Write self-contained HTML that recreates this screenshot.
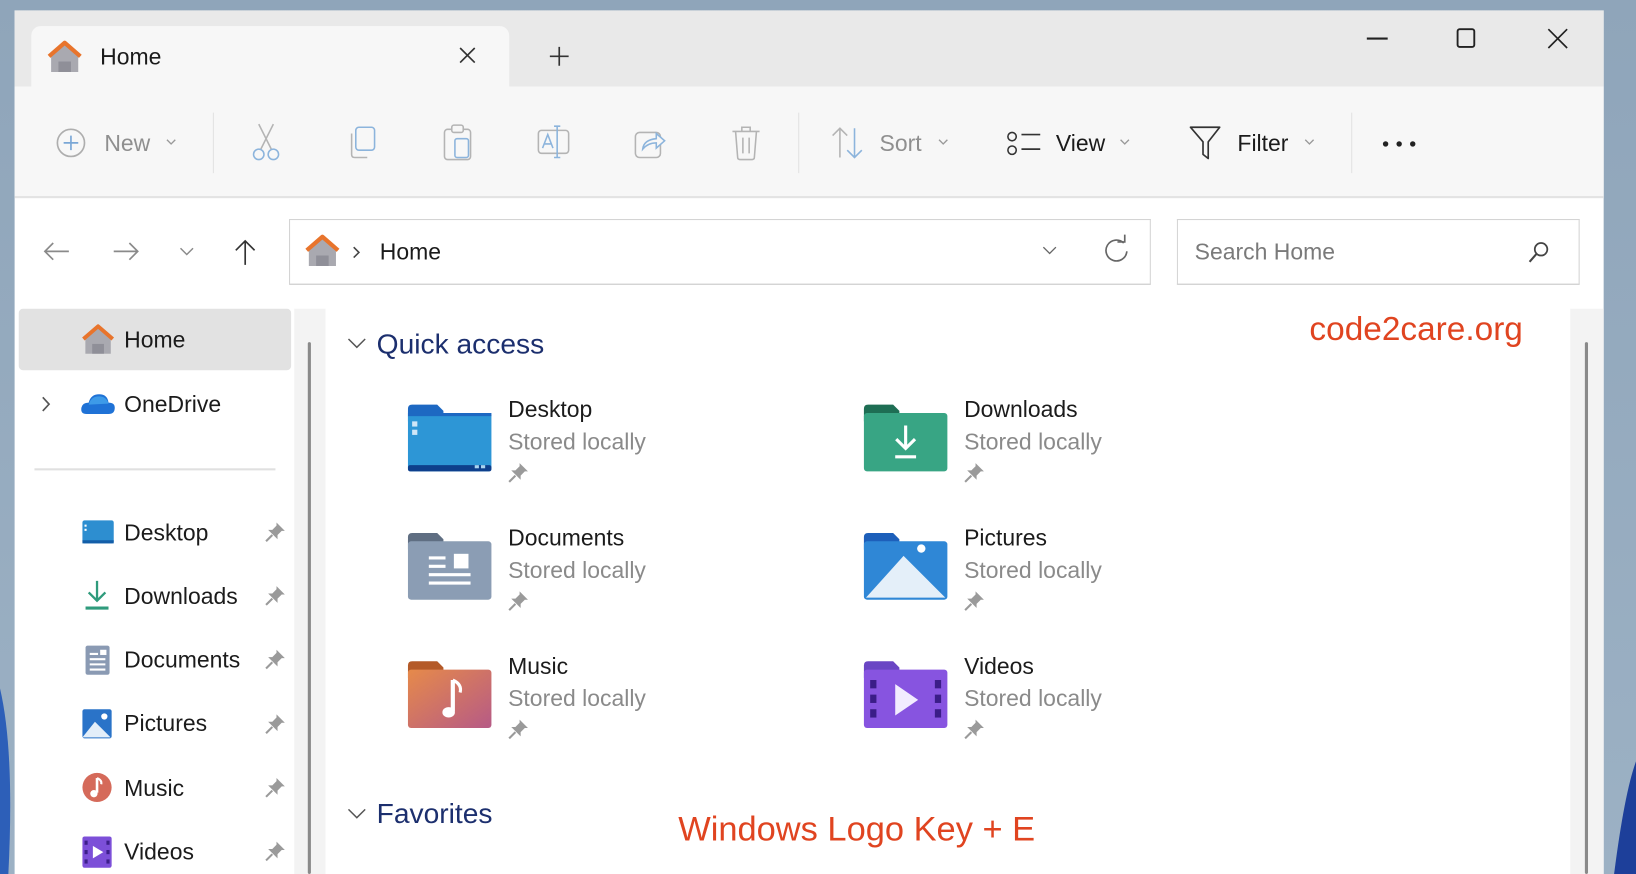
<!DOCTYPE html>
<html><head><meta charset="utf-8"><style>
html,body{margin:0;padding:0;width:1636px;height:874px;overflow:hidden;background:#8fa6bb;}
#w{position:absolute;left:0;top:0;width:1568px;height:838px;transform:scale(1.04337,1.04296);transform-origin:0 0;font-family:"Segoe UI","Liberation Sans",sans-serif;color:#1b1b1b;}
.a{position:absolute;}
.t{position:absolute;white-space:nowrap;line-height:1;font-size:22px!important;}
.big{font-size:27px!important}
svg{position:absolute;overflow:visible;}
</style></head><body><div id="w">
<div class="a" style="left:0;top:0;width:1568px;height:838px;background:linear-gradient(180deg,#8fa5ba,#9cb1c4)"></div>
<svg style="left:0;top:600px" width="16" height="238"><path d="M0 60 Q14 120 8 238 L0 238Z" fill="#2d5fb8"/></svg>
<svg style="left:1537px;top:700px" width="31" height="138"><path d="M10 138 Q20 60 31 30 L31 138Z" fill="#1d3f9a"/></svg>
<div class="a" style="left:14px;top:10px;width:1523px;height:828px;background:#fff"></div>
<div class="a" style="left:14px;top:10px;width:1523px;height:73px;background:#e9e9e9"></div>
<div class="a" style="left:30px;top:25px;width:458px;height:60px;background:#f7f7f7;border-radius:9px 9px 0 0"></div>
<div class="a" style="left:14px;top:83px;width:1523px;height:105px;background:#f7f7f7;border-bottom:2px solid #e3e3e3"></div>
<svg style="left:45px;top:39px" width="34" height="32" viewBox="0 0 34 32"><path d="M4 14 L17 2 L30 14 V30 H4Z" fill="#a9a9b0"/><path d="M11 30V20h12v10" fill="#8f8f98"/><path d="M2 15 L17 2 L32 15" stroke="#e8742c" stroke-width="4" fill="none" stroke-linejoin="round"/></svg>
<div class="t" style="left:96px;top:44px">Home</div>
<svg style="left:440px;top:45px" width="16" height="16"><path d="M1 1L15 15M15 1L1 15" stroke="#333" stroke-width="1.6"/></svg>
<svg style="left:527px;top:45px" width="18" height="18"><path d="M9 0V18M0 9H18" stroke="#333" stroke-width="1.6"/></svg>
<svg style="left:1310px;top:36px" width="20" height="2"><path d="M0 1H20" stroke="#222" stroke-width="2"/></svg>
<svg style="left:1396px;top:27px" width="18" height="20"><rect x="1" y="1" width="16" height="17" rx="2" stroke="#222" stroke-width="1.8" fill="none"/></svg>
<svg style="left:1483px;top:27px" width="20" height="20"><path d="M1 1L19 19M19 1L1 19" stroke="#222" stroke-width="1.6"/></svg>
<svg style="left:53px;top:122px" width="30" height="30"><circle cx="15" cy="15" r="13" stroke="#aeaeae" stroke-width="1.6" fill="none"/><path d="M15 8V22M8 15H22" stroke="#7aa7d6" stroke-width="1.6"/></svg>
<div class="t" style="left:100px;top:127px;color:#8f8f8f">New</div>
<svg style="left:159px;top:133px" width="10" height="6"><path d="M1 1L5 5L9 1" stroke="#999" stroke-width="1.3" fill="none"/></svg>
<div class="a" style="left:204px;top:108px;width:1px;height:58px;background:#e2e2e2"></div>
<svg style="left:240px;top:119px" width="30" height="36" viewBox="0 0 30 36"><path d="M8 0L20 24M22 0L10 24" stroke="#b4b4b4" stroke-width="1.5"/><circle cx="8" cy="29" r="5" stroke="#8cb4dc" stroke-width="1.5" fill="none"/><circle cx="22" cy="29" r="5" stroke="#8cb4dc" stroke-width="1.5" fill="none"/></svg>
<svg style="left:332px;top:121px" width="30" height="32"><rect x="9" y="1" width="18" height="22" rx="3" stroke="#8cb4dc" stroke-width="1.5" fill="none"/><path d="M5 7V27Q5 30 8 30H20" stroke="#b4b4b4" stroke-width="1.5" fill="none"/></svg>
<svg style="left:424px;top:119px" width="30" height="36"><rect x="2" y="5" width="25" height="29" rx="3" stroke="#b4b4b4" stroke-width="1.5" fill="none"/><rect x="9" y="1" width="11" height="7" rx="2" stroke="#b4b4b4" stroke-width="1.5" fill="#f7f7f7"/><rect x="12" y="14" width="13" height="18" rx="2" stroke="#8cb4dc" stroke-width="1.5" fill="none"/></svg>
<svg style="left:514px;top:120px" width="34" height="34"><rect x="2" y="5" width="29" height="22" rx="3" stroke="#b4b4b4" stroke-width="1.5" fill="none"/><path d="M6 22L11 9L16 22M8 18H14" stroke="#8cb4dc" stroke-width="1.5" fill="none"/><path d="M20 1V31M17 1H23M17 31H23" stroke="#8cb4dc" stroke-width="1.5" fill="#f7f7f7"/></svg>
<svg style="left:607px;top:121px" width="32" height="32"><rect x="2" y="6" width="24" height="24" rx="4" stroke="#b4b4b4" stroke-width="1.5" fill="none"/><path d="M9 22Q10 13 22 12V7L30 14L22 21V16Q14 16 9 22Z" stroke="#8cb4dc" stroke-width="1.5" fill="#f7f7f7"/></svg>
<svg style="left:701px;top:119px" width="28" height="36"><path d="M1 7H27M10 7V3H18V7" stroke="#b4b4b4" stroke-width="1.5" fill="none"/><path d="M4 7L6 32Q6 34 9 34H19Q22 34 22 32L24 7" stroke="#b4b4b4" stroke-width="1.5" fill="none"/><path d="M11 13V28M17 13V28" stroke="#b4b4b4" stroke-width="1.5"/></svg>
<div class="a" style="left:765px;top:108px;width:1px;height:58px;background:#e2e2e2"></div>
<svg style="left:797px;top:121px" width="32" height="32"><path d="M8 30V2M1 9L8 2L15 9" stroke="#b4b4b4" stroke-width="1.5" fill="none"/><path d="M22 2V30M15 23L22 30L29 23" stroke="#8cb4dc" stroke-width="1.5" fill="none"/></svg>
<div class="t" style="left:843px;top:127px;color:#8f8f8f">Sort</div>
<svg style="left:899px;top:133px" width="10" height="6"><path d="M1 1L5 5L9 1" stroke="#999" stroke-width="1.3" fill="none"/></svg>
<svg style="left:965px;top:125px" width="34" height="26"><circle cx="5" cy="6" r="4" stroke="#333" stroke-width="1.5" fill="none"/><circle cx="5" cy="19" r="4" stroke="#333" stroke-width="1.5" fill="none"/><path d="M14 4H32M14 18H32" stroke="#333" stroke-width="1.6"/></svg>
<div class="t" style="left:1012px;top:127px">View</div>
<svg style="left:1073px;top:133px" width="10" height="6"><path d="M1 1L5 5L9 1" stroke="#999" stroke-width="1.3" fill="none"/></svg>
<svg style="left:1139px;top:120px" width="34" height="34"><path d="M2 2H30L19 16V32L14 28V16Z" stroke="#333" stroke-width="1.6" fill="none" stroke-linejoin="round"/></svg>
<div class="t" style="left:1186px;top:127px">Filter</div>
<svg style="left:1250px;top:133px" width="10" height="6"><path d="M1 1L5 5L9 1" stroke="#999" stroke-width="1.3" fill="none"/></svg>
<div class="a" style="left:1295px;top:108px;width:1px;height:58px;background:#e2e2e2"></div>
<svg style="left:1325px;top:135px" width="34" height="6"><circle cx="3" cy="3" r="2.6" fill="#222"/><circle cx="16" cy="3" r="2.6" fill="#222"/><circle cx="29" cy="3" r="2.6" fill="#222"/></svg>
<svg style="left:41px;top:231px" width="26" height="20"><path d="M25 10H2M10 2L2 10L10 18" stroke="#8a8a8a" stroke-width="1.6" fill="none"/></svg>
<svg style="left:108px;top:231px" width="26" height="20"><path d="M1 10H24M16 2L24 10L16 18" stroke="#8a8a8a" stroke-width="1.6" fill="none"/></svg>
<svg style="left:172px;top:237px" width="14" height="8"><path d="M1 1L7 7L13 1" stroke="#8a8a8a" stroke-width="1.4" fill="none"/></svg>
<svg style="left:224px;top:229px" width="22" height="26"><path d="M11 25V2M2 11L11 2L20 11" stroke="#333" stroke-width="1.6" fill="none"/></svg>
<div class="a" style="left:277px;top:210px;width:824px;height:61px;border:1px solid #d4d4d4;border-bottom-color:#c4c4c4;background:#fff"></div>
<svg style="left:292px;top:225px" width="34" height="32" viewBox="0 0 34 32"><path d="M4 14 L17 2 L30 14 V30 H4Z" fill="#a9a9b0"/><path d="M11 30V20h12v10" fill="#8f8f98"/><path d="M2 15 L17 2 L32 15" stroke="#e8742c" stroke-width="4" fill="none" stroke-linejoin="round"/></svg>
<svg style="left:338px;top:236px" width="7" height="12"><path d="M1 1L6 6L1 11" stroke="#444" stroke-width="1.5" fill="none"/></svg>
<div class="t" style="left:364px;top:231px">Home</div>
<svg style="left:999px;top:236px" width="14" height="8"><path d="M1 1L7 7L13 1" stroke="#666" stroke-width="1.3" fill="none"/></svg>
<svg style="left:1057px;top:228px" width="26" height="26"><path d="M20 5A10 10 0 1 0 23 13" stroke="#666" stroke-width="1.6" fill="none"/><path d="M14 4H21V-3" stroke="#666" stroke-width="1.6" fill="none"/></svg>
<div class="a" style="left:1128px;top:210px;width:384px;height:61px;border:1px solid #d4d4d4;border-bottom-color:#c4c4c4;background:#fff"></div>
<div class="t" style="left:1145px;top:231px;color:#7a7a7a">Search Home</div>
<svg style="left:1464px;top:231px" width="22" height="22"><circle cx="13" cy="8" r="6" stroke="#444" stroke-width="1.7" fill="none"/><path d="M9 12L2 20" stroke="#444" stroke-width="2"/></svg>
<div class="a" style="left:18px;top:296px;width:261px;height:59px;background:#e2e2e2;border-radius:4px"></div>
<div class="a" style="left:282px;top:296px;width:30px;height:542px;background:#f3f3f3"></div>
<div class="a" style="left:295px;top:328px;width:3px;height:510px;background:#8a8a8a;border-radius:2px"></div>
<svg style="left:78px;top:311px" width="32" height="30" viewBox="0 0 34 32"><path d="M4 14 L17 2 L30 14 V30 H4Z" fill="#a9a9b0"/><path d="M11 30V20h12v10" fill="#8f8f98"/><path d="M2 15 L17 2 L32 15" stroke="#e8742c" stroke-width="4" fill="none" stroke-linejoin="round"/></svg>
<div class="t" style="left:119px;top:315px">Home</div>
<svg style="left:40px;top:380px" width="9" height="15"><path d="M1 1L7 7.5L1 14" stroke="#555" stroke-width="1.6" fill="none"/></svg>
<svg style="left:77px;top:375px" width="34" height="24"><path d="M6 22Q0 22 1 16Q2 11 8 11Q10 3 18 3Q26 3 27 11Q33 11 33 16Q33 22 27 22Z" fill="#1f72d6"/><path d="M8 13Q10 5 18 5Q25 5 27 12" fill="#3d9ae8"/></svg>
<div class="t" style="left:119px;top:377px">OneDrive</div>
<div class="a" style="left:33px;top:449px;width:231px;height:2px;background:#e0e0e0"></div>
<svg style="left:79px;top:498px" width="30" height="24"><rect x="0" y="1" width="30" height="22" rx="2" fill="#2d8ed0"/><rect x="0" y="20" width="30" height="3" fill="#135ea8"/><rect x="2" y="5" width="2" height="2" fill="#fff"/><rect x="2" y="9" width="2" height="2" fill="#fff"/></svg>
<div class="t" style="left:119px;top:500px">Desktop</div>
<svg style="left:80px;top:556px" width="26" height="30"><path d="M13 1V20M5 12L13 20L21 12" stroke="#2f9b7c" stroke-width="2.2" fill="none"/><path d="M2 27H24" stroke="#2f9b7c" stroke-width="3"/></svg>
<div class="t" style="left:119px;top:561px">Downloads</div>
<svg style="left:81px;top:618px" width="26" height="30"><rect x="1" y="1" width="23" height="28" rx="2" fill="#8a9ab3"/><path d="M5 9H13M5 14H20M5 19H20M5 24H20" stroke="#fff" stroke-width="2"/><rect x="15" y="5" width="6" height="5" fill="#fff"/></svg>
<div class="t" style="left:119px;top:622px">Documents</div>
<svg style="left:79px;top:680px" width="28" height="28"><rect x="0" y="0" width="28" height="28" rx="2" fill="#2a73c8"/><path d="M0 27L12 12L27 27Z" fill="#e3eef9"/><circle cx="21" cy="7" r="3" fill="#fff"/></svg>
<div class="t" style="left:119px;top:683px">Pictures</div>
<svg style="left:78px;top:740px" width="30" height="30"><circle cx="15" cy="15" r="14" fill="#d56a5a"/><path d="M15 6V20" stroke="#fff" stroke-width="2.5"/><circle cx="12" cy="21" r="3.5" fill="#fff"/><path d="M15 6Q20 8 19 12" stroke="#fff" stroke-width="2" fill="none"/></svg>
<div class="t" style="left:119px;top:745px">Music</div>
<svg style="left:79px;top:802px" width="28" height="30"><rect x="0" y="0" width="28" height="30" rx="2" fill="#7c4fd8"/><path d="M10 9L20 15L10 21Z" fill="#fff"/><rect x="2" y="4" width="3" height="4" fill="#3d1f8a"/><rect x="2" y="13" width="3" height="4" fill="#3d1f8a"/><rect x="2" y="22" width="3" height="4" fill="#3d1f8a"/><rect x="23" y="4" width="3" height="4" fill="#3d1f8a"/><rect x="23" y="13" width="3" height="4" fill="#3d1f8a"/><rect x="23" y="22" width="3" height="4" fill="#3d1f8a"/></svg>
<div class="t" style="left:119px;top:806px">Videos</div>
<svg style="left:254px;top:500px" width="20" height="20" viewBox="0 0 20 20"><path d="M11 1L19 9L16 9L12 13L12 17L3 8L7 8L11 4Z" fill="#9a9a9a"/><path d="M7 13L1 19" stroke="#9a9a9a" stroke-width="2"/></svg>
<svg style="left:254px;top:561px" width="20" height="20" viewBox="0 0 20 20"><path d="M11 1L19 9L16 9L12 13L12 17L3 8L7 8L11 4Z" fill="#9a9a9a"/><path d="M7 13L1 19" stroke="#9a9a9a" stroke-width="2"/></svg>
<svg style="left:254px;top:622px" width="20" height="20" viewBox="0 0 20 20"><path d="M11 1L19 9L16 9L12 13L12 17L3 8L7 8L11 4Z" fill="#9a9a9a"/><path d="M7 13L1 19" stroke="#9a9a9a" stroke-width="2"/></svg>
<svg style="left:254px;top:684px" width="20" height="20" viewBox="0 0 20 20"><path d="M11 1L19 9L16 9L12 13L12 17L3 8L7 8L11 4Z" fill="#9a9a9a"/><path d="M7 13L1 19" stroke="#9a9a9a" stroke-width="2"/></svg>
<svg style="left:254px;top:745px" width="20" height="20" viewBox="0 0 20 20"><path d="M11 1L19 9L16 9L12 13L12 17L3 8L7 8L11 4Z" fill="#9a9a9a"/><path d="M7 13L1 19" stroke="#9a9a9a" stroke-width="2"/></svg>
<svg style="left:254px;top:806px" width="20" height="20" viewBox="0 0 20 20"><path d="M11 1L19 9L16 9L12 13L12 17L3 8L7 8L11 4Z" fill="#9a9a9a"/><path d="M7 13L1 19" stroke="#9a9a9a" stroke-width="2"/></svg>
<div class="a" style="left:1505px;top:296px;width:32px;height:542px;background:#f3f3f3"></div>
<div class="a" style="left:1519px;top:328px;width:3px;height:510px;background:#8a8a8a;border-radius:2px"></div>
<svg style="left:333px;top:324px" width="18" height="10"><path d="M1 1L9 9L17 1" stroke="#555" stroke-width="1.4" fill="none"/></svg>
<div class="t big" style="left:361px;top:317px;color:#1c2f6e">Quick access</div>
<div class="t" style="left:1255px;top:299px;font-size:32px!important;color:#e04420;font-family:'Liberation Sans',sans-serif">code2care.org</div>
<svg style="left:391px;top:388px" width="80" height="64" viewBox="0 0 80 64"><path d="M0 4Q0 0 4 0H28L34 6V16H0Z" fill="#1d68c2"/><rect x="0" y="8" width="80" height="56" rx="3" fill="#2d96d6"/><rect x="0" y="8" width="80" height="3" fill="#1d68c2"/><rect x="0" y="58" width="80" height="6" rx="2" fill="#0d3f8c"/><rect x="4" y="16" width="5" height="5" fill="#cfe6f7"/><rect x="4" y="24" width="5" height="5" fill="#cfe6f7"/><rect x="64" y="58" width="4" height="3" fill="#a9d4f0"/><rect x="70" y="58" width="4" height="3" fill="#a9d4f0"/></svg>
<svg style="left:828px;top:388px" width="80" height="64" viewBox="0 0 80 64"><path d="M0 4Q0 0 4 0H28L34 6V16H0Z" fill="#1e6e54"/><rect x="0" y="8" width="80" height="56" rx="3" fill="#38a584"/><path d="M40 20V42M31 33L40 42L49 33" stroke="#fff" stroke-width="3" fill="none"/><path d="M30 50H50" stroke="#fff" stroke-width="3"/></svg>
<svg style="left:391px;top:511px" width="80" height="64" viewBox="0 0 80 64"><path d="M0 4Q0 0 4 0H28L34 6V16H0Z" fill="#5f6e82"/><rect x="0" y="8" width="80" height="56" rx="3" fill="#8b9db4"/><path d="M20 24H36M20 32H36M20 40H60M20 48H60" stroke="#fff" stroke-width="3"/><rect x="44" y="20" width="14" height="14" fill="#fff"/></svg>
<svg style="left:828px;top:511px" width="80" height="64" viewBox="0 0 80 64"><path d="M0 4Q0 0 4 0H28L34 6V16H0Z" fill="#1d5fba"/><rect x="0" y="8" width="80" height="56" rx="3" fill="#2f87d6"/><path d="M2 62L38 22L78 62Z" fill="#e4eff9"/><circle cx="55" cy="15" r="4" fill="#fff"/></svg>
<svg style="left:391px;top:634px" width="80" height="64" viewBox="0 0 80 64"><path d="M0 4Q0 0 4 0H28L34 6V16H0Z" fill="#b45a28"/><defs><linearGradient id="mg" x1="0" y1="0" x2="1" y2="1"><stop offset="0" stop-color="#e68a4a"/><stop offset="1" stop-color="#b65a86"/></linearGradient></defs><rect x="0" y="8" width="80" height="56" rx="3" fill="url(#mg)"/><path d="M43 18V48" stroke="#fff" stroke-width="4"/><ellipse cx="39" cy="49" rx="6" ry="5" fill="#fff"/><path d="M43 18Q52 22 50 30" stroke="#fff" stroke-width="3" fill="none"/></svg>
<svg style="left:828px;top:634px" width="80" height="64" viewBox="0 0 80 64"><path d="M0 4Q0 0 4 0H28L34 6V16H0Z" fill="#6a46c4"/><rect x="0" y="8" width="80" height="56" rx="3" fill="#8754e0"/><path d="M30 22L52 37L30 52Z" fill="#f2ecff"/><rect x="6" y="18" width="6" height="8" fill="#3b1d88"/><rect x="6" y="32" width="6" height="8" fill="#3b1d88"/><rect x="6" y="46" width="6" height="8" fill="#3b1d88"/><rect x="68" y="18" width="6" height="8" fill="#3b1d88"/><rect x="68" y="32" width="6" height="8" fill="#3b1d88"/><rect x="68" y="46" width="6" height="8" fill="#3b1d88"/></svg>
<div class="t" style="left:487px;top:382px">Desktop</div>
<div class="t" style="left:487px;top:413px;color:#8a8a8a">Stored locally</div>
<div class="t" style="left:487px;top:505px">Documents</div>
<div class="t" style="left:487px;top:536px;color:#8a8a8a">Stored locally</div>
<div class="t" style="left:487px;top:628px">Music</div>
<div class="t" style="left:487px;top:659px;color:#8a8a8a">Stored locally</div>
<div class="t" style="left:924px;top:382px">Downloads</div>
<div class="t" style="left:924px;top:413px;color:#8a8a8a">Stored locally</div>
<div class="t" style="left:924px;top:505px">Pictures</div>
<div class="t" style="left:924px;top:536px;color:#8a8a8a">Stored locally</div>
<div class="t" style="left:924px;top:628px">Videos</div>
<div class="t" style="left:924px;top:659px;color:#8a8a8a">Stored locally</div>
<svg style="left:487px;top:443px" width="20" height="20" viewBox="0 0 20 20"><path d="M11 1L19 9L16 9L12 13L12 17L3 8L7 8L11 4Z" fill="#9a9a9a"/><path d="M7 13L1 19" stroke="#9a9a9a" stroke-width="2"/></svg>
<svg style="left:487px;top:566px" width="20" height="20" viewBox="0 0 20 20"><path d="M11 1L19 9L16 9L12 13L12 17L3 8L7 8L11 4Z" fill="#9a9a9a"/><path d="M7 13L1 19" stroke="#9a9a9a" stroke-width="2"/></svg>
<svg style="left:487px;top:689px" width="20" height="20" viewBox="0 0 20 20"><path d="M11 1L19 9L16 9L12 13L12 17L3 8L7 8L11 4Z" fill="#9a9a9a"/><path d="M7 13L1 19" stroke="#9a9a9a" stroke-width="2"/></svg>
<svg style="left:924px;top:443px" width="20" height="20" viewBox="0 0 20 20"><path d="M11 1L19 9L16 9L12 13L12 17L3 8L7 8L11 4Z" fill="#9a9a9a"/><path d="M7 13L1 19" stroke="#9a9a9a" stroke-width="2"/></svg>
<svg style="left:924px;top:566px" width="20" height="20" viewBox="0 0 20 20"><path d="M11 1L19 9L16 9L12 13L12 17L3 8L7 8L11 4Z" fill="#9a9a9a"/><path d="M7 13L1 19" stroke="#9a9a9a" stroke-width="2"/></svg>
<svg style="left:924px;top:689px" width="20" height="20" viewBox="0 0 20 20"><path d="M11 1L19 9L16 9L12 13L12 17L3 8L7 8L11 4Z" fill="#9a9a9a"/><path d="M7 13L1 19" stroke="#9a9a9a" stroke-width="2"/></svg>
<svg style="left:333px;top:775px" width="18" height="10"><path d="M1 1L9 9L17 1" stroke="#555" stroke-width="1.4" fill="none"/></svg>
<div class="t big" style="left:361px;top:767px;color:#1c2f6e">Favorites</div>
<div class="t" style="left:650px;top:778px;font-size:33px!important;color:#e04420;font-family:'Liberation Sans',sans-serif">Windows Logo Key + E</div>
</div></body></html>
